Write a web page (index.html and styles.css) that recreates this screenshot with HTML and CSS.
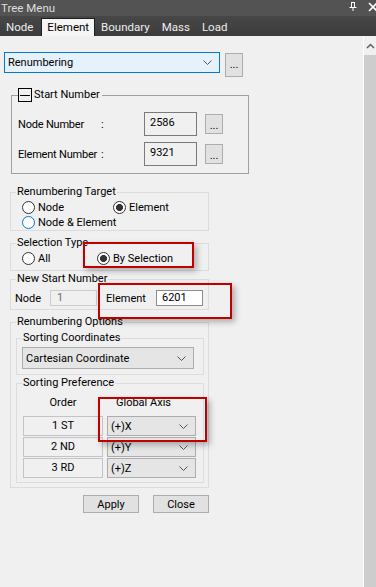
FILE: index.html
```html
<!DOCTYPE html>
<html lang="en">
<head>
    <meta charset="UTF-8">
    <meta name="viewport" content="width=device-width, initial-scale=1.0">
    <title>Tree Menu</title>
    <link rel="stylesheet" href="styles.css">
</head>
<body>
    <div class="titlebar">
        <span class="title">Tree Menu</span>
        <svg class="pin" width="8" height="10" viewBox="0 0 8 10">
            <path d="M2 1.5H6M2.5 1.5V6.5M5.5 1.5V6.5M0.5 6.5H7.5M4 6.5V10" stroke="#fff" fill="none"/>
        </svg>
        <svg class="close-x" width="10" height="10" viewBox="0 0 10 10">
            <path d="M1 1L9 9M9 1L1 9" stroke="#fff" stroke-width="1.6"/>
        </svg>
    </div>
    <div class="tabs">
        <span class="tab">Node</span>
        <span class="tab active">Element</span>
        <span class="tab">Boundary</span>
        <span class="tab">Mass</span>
        <span class="tab">Load</span>
    </div>

    <div class="body">
        <div class="panel">
            <div class="combo-row">
                <div class="combo combo-main">
                    <span>Renumbering</span>
                    <svg class="chev" width="9" height="5" viewBox="0 0 9 5"><path d="M0.5 0.5L4.5 4.5L8.5 0.5" stroke="#555" fill="none"/></svg>
                </div>
                <button class="dots dots-main" type="button">...</button>
            </div>

            <fieldset class="group start-group">
                <legend><span class="collapse-box"></span>Start Number</legend>
                <div class="num-row">
                    <span class="num-label">Node Number</span><span class="colon">:</span>
                    <span class="num-box">2586</span>
                    <button class="dots" type="button">...</button>
                </div>
                <div class="num-row">
                    <span class="num-label">Element Number</span><span class="colon">:</span>
                    <span class="num-box">9321</span>
                    <button class="dots" type="button">...</button>
                </div>
            </fieldset>

            <fieldset class="group target-group">
                <legend>Renumbering Target</legend>
                <div class="radio-row">
                    <span class="radio col-target"><span class="dot"></span>Node</span>
                    <span class="radio checked"><span class="dot"></span>Element</span>
                </div>
                <div class="radio-row">
                    <span class="radio hover"><span class="dot"></span>Node &amp; Element</span>
                </div>
            </fieldset>

            <fieldset class="group selection-group">
                <legend>Selection Type</legend>
                <div class="radio-row">
                    <span class="radio col-selection"><span class="dot"></span>All</span>
                    <span class="radio checked"><span class="dot"></span>By Selection</span>
                </div>
            </fieldset>

            <fieldset class="group newstart-group">
                <legend>New Start Number</legend>
                <div class="new-row">
                    <span class="new-label">Node</span>
                    <span class="new-box disabled">1</span>
                    <span class="new-label elem-label">Element</span>
                    <span class="new-box">6201</span>
                </div>
            </fieldset>

            <fieldset class="group options-group">
                <legend>Renumbering Options</legend>
                <fieldset class="subgroup coords-group">
                    <legend>Sorting Coordinates</legend>
                    <div class="combo combo-coords">
                        <span>Cartesian Coordinate</span>
                        <svg class="chev" width="9" height="5" viewBox="0 0 9 5"><path d="M0.5 0.5L4.5 4.5L8.5 0.5" stroke="#555" fill="none"/></svg>
                    </div>
                </fieldset>
                <fieldset class="subgroup pref-group">
                    <legend>Sorting Preference</legend>
                    <div class="pref-head">
                        <span class="order-head">Order</span>
                        <span class="axis-head">Global Axis</span>
                    </div>
                    <div class="pref-row">
                        <span class="order-box">1 ST</span>
                        <div class="combo combo-axis">
                            <span>(+)X</span>
                            <svg class="chev" width="9" height="5" viewBox="0 0 9 5"><path d="M0.5 0.5L4.5 4.5L8.5 0.5" stroke="#555" fill="none"/></svg>
                        </div>
                    </div>
                    <div class="pref-row">
                        <span class="order-box">2 ND</span>
                        <div class="combo combo-axis">
                            <span>(+)Y</span>
                            <svg class="chev" width="9" height="5" viewBox="0 0 9 5"><path d="M0.5 0.5L4.5 4.5L8.5 0.5" stroke="#555" fill="none"/></svg>
                        </div>
                    </div>
                    <div class="pref-row">
                        <span class="order-box">3 RD</span>
                        <div class="combo combo-axis">
                            <span>(+)Z</span>
                            <svg class="chev" width="9" height="5" viewBox="0 0 9 5"><path d="M0.5 0.5L4.5 4.5L8.5 0.5" stroke="#555" fill="none"/></svg>
                        </div>
                    </div>
                </fieldset>
            </fieldset>

            <div class="button-row">
                <button class="btn" type="button">Apply</button>
                <button class="btn" type="button">Close</button>
            </div>

            <!-- annotation boxes drawn over the dialog -->
            <div class="mark mark-selection"></div>
            <div class="mark mark-element"></div>
            <div class="mark mark-axis"></div>
        </div>

        <div class="scrollbar">
            <div class="scroll-up">
                <svg width="9" height="6" viewBox="0 0 9 6"><path d="M1 5L4.5 1.5L8 5" stroke="#606060" stroke-width="1.5" fill="none"/></svg>
            </div>
            <div class="scroll-thumb"></div>
        </div>
    </div>
</body>
</html>
```

FILE: styles.css
```css
body {
    background-color: #F0F0F0;
    color: #000000;
    font-family: Roboto, 'Liberation Sans', sans-serif;
    font-size: 11px;
    height: 587px;
    margin: 0;
    overflow: hidden;
    padding: 0;
    white-space: nowrap;
}

button {
    font-family: inherit;
    font-size: inherit;
    margin: 0;
    padding: 0;
}

.titlebar {
    align-items: center;
    background-color: #535353;
    display: flex;
    height: 16px;
}
.title {
    color: #DEDEDE;
    flex: 1;
    font-size: 11.5px;
    padding-left: 1px;
}
.pin {
    margin-right: 11px;
    margin-top: -4px;
}
.close-x {
    margin-right: -2px;
    margin-top: -2px;
}

.tabs {
    align-items: flex-end;
    background: linear-gradient(#474747, #3C3C3C);
    display: flex;
    height: 20px;
}
.tab {
    color: #EEEEEE;
    font-size: 11.5px;
    height: 17px;
    line-height: 16px;
    padding: 0 6px;
}
.tab:first-child {
    padding: 0 8px 0 6px;
}
.tab.active {
    background-color: #F5F5F5;
    border: 1px solid #1E1E1E;
    border-bottom: none;
    color: #000000;
    padding: 0 5px;
}

.body {
    display: flex;
    height: 551px;
}
.panel {
    position: relative;
    width: 363px;
}

/* combo boxes */
.combo {
    align-items: center;
    background-color: #E5E5E5;
    border: 1px solid #ADADAD;
    box-sizing: border-box;
    display: flex;
    justify-content: space-between;
    padding: 0 7px 0 3px;
}
.combo-row {
    display: flex;
    margin: 16px 0 0 4px;
}
.combo-main {
    background-color: #E5F1FB;
    border-color: #0078D7;
    height: 21px;
    width: 216px;
}
.dots {
    background-color: #E1E1E1;
    border: 1px solid #ADADAD;
    box-sizing: border-box;
    height: 20px;
    line-height: 22px;
    width: 18px;
}
.dots-main {
    height: 24px;
    margin: 1px 0 0 5px;
}

/* group boxes */
fieldset {
    border: 1px solid #DCDCDC;
    box-sizing: border-box;
    margin: 0;
    min-width: 0;
    padding: 0;
}
legend {
    line-height: 14px;
    margin-left: 5px;
    padding: 0 1px;
}
.group {
    margin-left: 10px;
    width: 199px;
}

.start-group {
    border-color: #A0A0A0;
    margin: 11px 0 0 11px;
    padding: 10px 0 7px 0;
    width: 238px;
}
.start-group legend {
    align-items: center;
    display: flex;
    margin-left: 6px;
    padding: 0 2px 0 0;
}
.collapse-box {
    border: 1px solid #000000;
    box-sizing: border-box;
    height: 14px;
    margin-right: 2px;
    position: relative;
    width: 14px;
}
.collapse-box::after {
    border-top: 1px solid #000000;
    content: "";
    left: 1px;
    position: absolute;
    right: 1px;
    top: 6px;
}
.num-row {
    align-items: center;
    display: flex;
    height: 24px;
    padding-left: 6px;
}
.num-row + .num-row {
    margin-top: 6px;
}
.num-label {
    letter-spacing: -0.2px;
    width: 83px;
}
.colon {
    width: 43px;
}
.num-box {
    align-self: stretch;
    border: 1px solid #7A7A7A;
    box-sizing: border-box;
    padding: 3px 5px;
    width: 53px;
}
.num-row .dots {
    margin-left: 8px;
}

/* radio buttons */
.target-group {
    margin-top: 11px;
    padding-top: 1px;
}
.selection-group {
    margin-top: 5px;
    padding: 1px 0 4px 0;
}
.radio-row {
    align-items: center;
    display: flex;
    height: 15px;
    padding-left: 11px;
}
.radio {
    align-items: center;
    display: flex;
    gap: 3px;
}
.col-target {
    width: 91px;
}
.col-selection {
    width: 75px;
}
.dot {
    background-color: #FFFFFF;
    border: 1px solid #333333;
    border-radius: 50%;
    box-sizing: border-box;
    height: 13px;
    width: 13px;
}
.checked .dot {
    background: radial-gradient(circle, #333333 0 3.2px, #FFFFFF 3.8px);
}
.hover .dot {
    border-color: #0078D7;
}

/* new start number */
.newstart-group {
    margin-top: 1px;
    padding: 4px 0 3px 0;
}
.new-row {
    align-items: center;
    display: flex;
    height: 16px;
    padding-left: 4px;
}
.new-label {
    width: 35px;
}
.elem-label {
    margin-left: 9px;
    width: 50px;
}
.new-box {
    align-self: stretch;
    background-color: #FFFFFF;
    border: 1px solid #8C8C8C;
    box-sizing: border-box;
    line-height: 14px;
    padding-left: 5px;
    width: 47px;
}
.new-box.disabled {
    background-color: #F0F0F0;
    border-color: #CCCCCC;
    color: #6D6D6D;
    padding-left: 6px;
}

/* renumbering options */
.options-group {
    margin-top: 5px;
    padding: 2px 0 4px 0;
}
.subgroup {
    margin-left: 5px;
    width: 188px;
}
.coords-group {
    padding: 2px 0 5px 0;
}
.combo-coords {
    height: 22px;
    margin-left: 5px;
    width: 172px;
}
.pref-group {
    margin-top: 1px;
    padding: 6px 0 4px 0;
}
.pref-head {
    display: flex;
    line-height: 14px;
    padding-left: 6px;
}
.order-head {
    text-align: center;
    width: 80px;
}
.axis-head {
    padding-left: 13px;
}
.pref-row {
    display: flex;
    gap: 4px;
    height: 20px;
    margin-top: 1px;
    padding-left: 6px;
}
.pref-head + .pref-row {
    margin-top: 6px;
}
.order-box {
    border: 1px solid #C4C4C4;
    box-sizing: border-box;
    line-height: 18px;
    text-align: center;
    width: 80px;
}
.combo-axis {
    width: 89px;
}

.button-row {
    display: flex;
    gap: 14px;
    justify-content: flex-end;
    margin: 7px 0 0 10px;
    width: 199px;
}
.btn {
    background-color: #E1E1E1;
    border: 1px solid #ADADAD;
    height: 18px;
    line-height: 15px;
    width: 56px;
}

/* red highlight boxes */
.mark {
    border: 2px solid #C00000;
    box-shadow: 3px 3px 6px rgba(0, 0, 0, 0.28);
    box-sizing: border-box;
    position: absolute;
}
.mark-selection {
    height: 26px;
    left: 83px;
    top: 206px;
    width: 111px;
}
.mark-element {
    height: 36px;
    left: 98px;
    top: 247px;
    width: 134px;
}
.mark-axis {
    height: 45px;
    left: 98px;
    top: 361px;
    width: 109px;
}

.scrollbar {
    border-left: 1px solid #FFFFFF;
    display: flex;
    flex-direction: column;
    width: 12px;
}
.scroll-up {
    align-items: center;
    display: flex;
    height: 19px;
    justify-content: center;
}
.scroll-thumb {
    background-color: #CDCDCD;
    flex: 1;
}
```
